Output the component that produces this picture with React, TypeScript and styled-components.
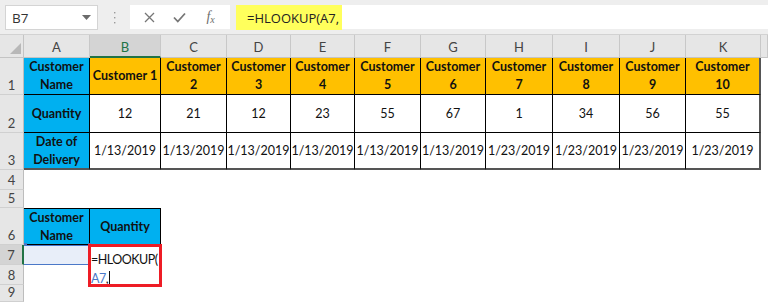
import { ReactNode } from 'react'
import styled, { createGlobalStyle, css } from 'styled-components'

const GlobalStyle = createGlobalStyle`
  html, body {
    margin: 0;
    padding: 0;
    background: #ffffff;
  }
  body {
    font-family: Lato, "Liberation Sans", sans-serif;
  }
`

const Sheet = styled.div`
  width: 768px;
  height: 302px;
  overflow: hidden;
  background: #ffffff;
  display: flex;
  flex-direction: column;
`

/* formula bar */

const FormulaBar = styled.div`
  height: 35px;
  box-sizing: border-box;
  background: #eeeeee;
  border-bottom: 1px solid #d2d2d2;
  display: flex;
  align-items: flex-start;
  padding: 5px 0 0 5px;
`

const NameBox = styled.div`
  width: 93px;
  height: 25px;
  box-sizing: border-box;
  background: #ffffff;
  border: 1px solid #d4d4d4;
  display: flex;
  align-items: center;
  justify-content: space-between;
  padding: 0 6px 0 6px;
  font-family: "Open Sans", sans-serif;
  font-size: 13.5px;
  color: #333333;
`

const Grip = styled.div`
  width: 32px;
  height: 25px;
  display: flex;
  align-items: center;
  justify-content: center;
`

const FxBox = styled.div`
  width: 100px;
  height: 24px;
  background: #ffffff;
  display: flex;
  align-items: center;
  justify-content: space-around;
  padding: 0 4px;
  box-sizing: border-box;
`

const FxButton = styled.span`
  width: 24px;
  display: flex;
  justify-content: center;
  color: #767676;
`

const FxLabel = styled.span`
  font-family: "Liberation Serif", serif;
  font-style: italic;
  font-size: 14px;
  color: #6e6e6e;
  sub {
    font-size: 10px;
    vertical-align: -2px;
  }
`

const FormulaField = styled.div`
  flex: 1;
  margin-left: 6px;
  height: 24px;
  background: #ffffff;
  display: flex;
`

const FormulaHighlight = styled.div`
  width: 106px;
  height: 25px;
  background: #ffff5c;
  display: flex;
  align-items: center;
  padding-left: 11px;
  box-sizing: border-box;
  font-family: "Open Sans", sans-serif;
  font-size: 13px;
  color: #222222;
`

/* grid */

const Grid = styled.div`
  display: grid;
  grid-template-columns: 24px 66px 71px 66px 64px 64px 66px 65px 67px 67px 66px 75px 1fr;
  grid-template-rows: 23px 37px 38px 37px 20px 18px 37px 20px 20px 17px;
  font-family: Lato, "Liberation Sans", sans-serif;
`

const Corner = styled.div`
  background: #e6e6e6;
  border-right: 1px solid #c4c4c4;
  border-bottom: 1px solid #c4c4c4;
  display: flex;
  align-items: flex-end;
  justify-content: flex-end;
  padding: 0 2px 3px 0;
`

const ColHead = styled.div<{ $active?: boolean }>`
  background: ${({ $active }) => ($active ? '#d4d4d4' : '#e6e6e6')};
  border-right: 1px solid #c8c8c8;
  border-bottom: ${({ $active }) => ($active ? '2px solid #217346' : '1px solid #c4c4c4')};
  color: ${({ $active }) => ($active ? '#217346' : '#444444')};
  font-size: 13px;
  display: flex;
  align-items: center;
  justify-content: center;
  padding-top: 2px;
`

const RowHead = styled.div<{ $active?: boolean }>`
  background: ${({ $active }) => ($active ? '#d4d4d4' : '#e6e6e6')};
  border-right: ${({ $active }) => ($active ? '2px solid #217346' : '1px solid #bdbdbd')};
  border-bottom: 1px solid #d0d0d0;
  color: #444444;
  font-size: 13px;
  display: flex;
  align-items: flex-end;
  justify-content: center;
  padding-bottom: 1px;
`

type Fill = 'blue' | 'gold' | 'white' | 'none'

const fills: Record<Fill, string> = {
  blue: '#00b0f0',
  gold: '#ffc000',
  white: '#ffffff',
  none: '#ffffff',
}

const Cell = styled.div<{
  $fill: Fill
  $bold?: boolean
  $top?: boolean
  $lastCol?: boolean
  $lastRow?: boolean
}>`
  position: relative;
  box-sizing: border-box;
  background: ${({ $fill }) => fills[$fill]};
  color: #111111;
  font-size: 12.5px;
  font-weight: ${({ $bold }) => ($bold ? 700 : 400)};
  line-height: 18px;
  white-space: pre-line;
  text-align: center;
  display: flex;
  align-items: center;
  justify-content: center;
  ${({ $fill, $top, $lastCol, $lastRow }) =>
    $fill !== 'none' &&
    css`
      border-right: ${$lastCol ? '2px solid #555555' : '1px solid #000000'};
      border-bottom: ${$lastRow ? '2px solid #555555' : '1px solid #000000'};
      border-top: ${$top ? '1px solid #000000' : '0'};
    `}
`

const RefRange = styled.div`
  position: absolute;
  inset: 0 0 0 0;
  background: #e8eef9;
  border-top: 1px solid #4a78c8;
  border-bottom: 1px solid #4a78c8;
`

const Handle = styled.span<{ $x: 'left' | 'right'; $y: 'top' | 'bottom' }>`
  position: absolute;
  width: 3px;
  height: 3px;
  background: #4a78c8;
  ${({ $x }) => ($x === 'left' ? 'left: 0;' : 'right: -1px;')}
  ${({ $y }) => ($y === 'top' ? 'top: -2px;' : 'bottom: -2px;')}
`

const EditBox = styled.div`
  position: absolute;
  left: -2px;
  top: -1px;
  width: 74px;
  height: 43px;
  box-sizing: border-box;
  border: 3px solid #ee1c25;
  background: #ffffff;
  z-index: 2;
  padding: 3px 0 0 0;
  text-align: left;
  font-size: 12.5px;
  font-weight: 400;
  letter-spacing: -0.5px;
  line-height: 19px;
  color: #111111;
  white-space: nowrap;
  overflow: hidden;
`

const RefText = styled.span`
  color: #4a78c8;
`

const Caret = styled.span`
  display: inline-block;
  width: 1px;
  height: 14px;
  background: #111111;
  vertical-align: -2px;
  margin-left: 1px;
`

const FillMark = styled.span`
  position: absolute;
  right: -4px;
  top: 14px;
  width: 3px;
  height: 5px;
  background: #217346;
`

const columns = ['A', 'B', 'C', 'D', 'E', 'F', 'G', 'H', 'I', 'J', 'K']
const quantities = ['12', '21', '12', '23', '55', '67', '1', '34', '56', '55']
const dates = [
  '1/13/2019', '1/13/2019', '1/13/2019', '1/13/2019', '1/13/2019',
  '1/13/2019', '1/23/2019', '1/23/2019', '1/23/2019', '1/23/2019',
]
const rowNumbers = ['1', '2', '3', '4', '5', '6', '7', '8', '9']

function Blank() {
  return <Cell $fill="none" />
}

function BlankRow({ skip = 0 }: { skip?: number }) {
  const count = 12 - skip
  return (
    <>
      {Array.from({ length: count }).map((_, i) => (
        <Blank key={i} />
      ))}
    </>
  )
}

function TableRow({
  label,
  values,
  fill,
  bold,
  lastRow,
}: {
  label: string
  values: string[]
  fill: Fill
  bold?: boolean
  lastRow?: boolean
}) {
  return (
    <>
      <Cell $fill="blue" $bold $lastRow={lastRow}>
        {label}
      </Cell>
      {values.map((v, i) => (
        <Cell key={i} $fill={fill} $bold={bold} $lastRow={lastRow} $lastCol={i === values.length - 1}>
          {v}
        </Cell>
      ))}
      <Blank />
    </>
  )
}

function Row({ n, active, children }: { n: string; active?: boolean; children: ReactNode }) {
  return (
    <>
      <RowHead $active={active}>{n}</RowHead>
      {children}
    </>
  )
}

export default function App() {
  const customers = columns.slice(1).map((_, i) => (i === 0 ? 'Customer 1' : `Customer\n${i + 1}`))

  return (
    <>
      <GlobalStyle />
      <Sheet>
        <FormulaBar>
          <NameBox>
            <span>B7</span>
            <svg width="9" height="5" viewBox="0 0 9 5">
              <polygon points="0,0 9,0 4.5,5" fill="#6b6b6b" />
            </svg>
          </NameBox>
          <Grip>
            <svg width="3" height="12" viewBox="0 0 3 12">
              <rect x="1" y="0" width="1.4" height="1.4" fill="#9a9a9a" />
              <rect x="1" y="5" width="1.4" height="1.4" fill="#9a9a9a" />
              <rect x="1" y="10" width="1.4" height="1.4" fill="#9a9a9a" />
            </svg>
          </Grip>
          <FxBox>
            <FxButton>
              <svg width="11" height="11" viewBox="0 0 11 11">
                <path d="M1 1 L10 10 M10 1 L1 10" stroke="#767676" strokeWidth="1.3" fill="none" />
              </svg>
            </FxButton>
            <FxButton>
              <svg width="13" height="11" viewBox="0 0 13 11">
                <path d="M1 5.5 L4.8 9.5 L12 1.5" stroke="#767676" strokeWidth="1.8" fill="none" />
              </svg>
            </FxButton>
            <FxButton>
              <FxLabel>
                f<sub>x</sub>
              </FxLabel>
            </FxButton>
          </FxBox>
          <FormulaField>
            <FormulaHighlight>=HLOOKUP(A7,</FormulaHighlight>
          </FormulaField>
        </FormulaBar>

        <Grid>
          <Corner>
            <svg width="11" height="11" viewBox="0 0 11 11">
              <polygon points="11,0 11,11 0,11" fill="#b8b8b8" />
            </svg>
          </Corner>
          {columns.map((c) => (
            <ColHead key={c} $active={c === 'B'}>
              {c}
            </ColHead>
          ))}
          <ColHead />

          <Row n={rowNumbers[0]}>
            <TableRow label={'Customer\nName'} values={customers} fill="gold" bold />
          </Row>
          <Row n={rowNumbers[1]}>
            <TableRow label="Quantity" values={quantities} fill="white" />
          </Row>
          <Row n={rowNumbers[2]}>
            <TableRow label={'Date of\nDelivery'} values={dates} fill="white" lastRow />
          </Row>
          <Row n={rowNumbers[3]}>
            <BlankRow />
          </Row>
          <Row n={rowNumbers[4]}>
            <BlankRow />
          </Row>
          <Row n={rowNumbers[5]}>
            <Cell $fill="blue" $bold $top>
              {'Customer\nName'}
            </Cell>
            <Cell $fill="blue" $bold $top>
              Quantity
            </Cell>
            <BlankRow skip={2} />
          </Row>
          <Row n={rowNumbers[6]} active>
            <Cell $fill="none">
              <RefRange />
              <Handle $x="left" $y="top" />
              <Handle $x="right" $y="top" />
              <Handle $x="left" $y="bottom" />
              <Handle $x="right" $y="bottom" />
            </Cell>
            <Cell $fill="none">
              <FillMark />
              <EditBox>
                =HLOOKUP(
                <br />
                <RefText>A7</RefText>,<Caret />
              </EditBox>
            </Cell>
            <BlankRow skip={2} />
          </Row>
          <Row n={rowNumbers[7]}>
            <BlankRow />
          </Row>
          <Row n={rowNumbers[8]}>
            <BlankRow />
          </Row>
        </Grid>
      </Sheet>
    </>
  )
}
